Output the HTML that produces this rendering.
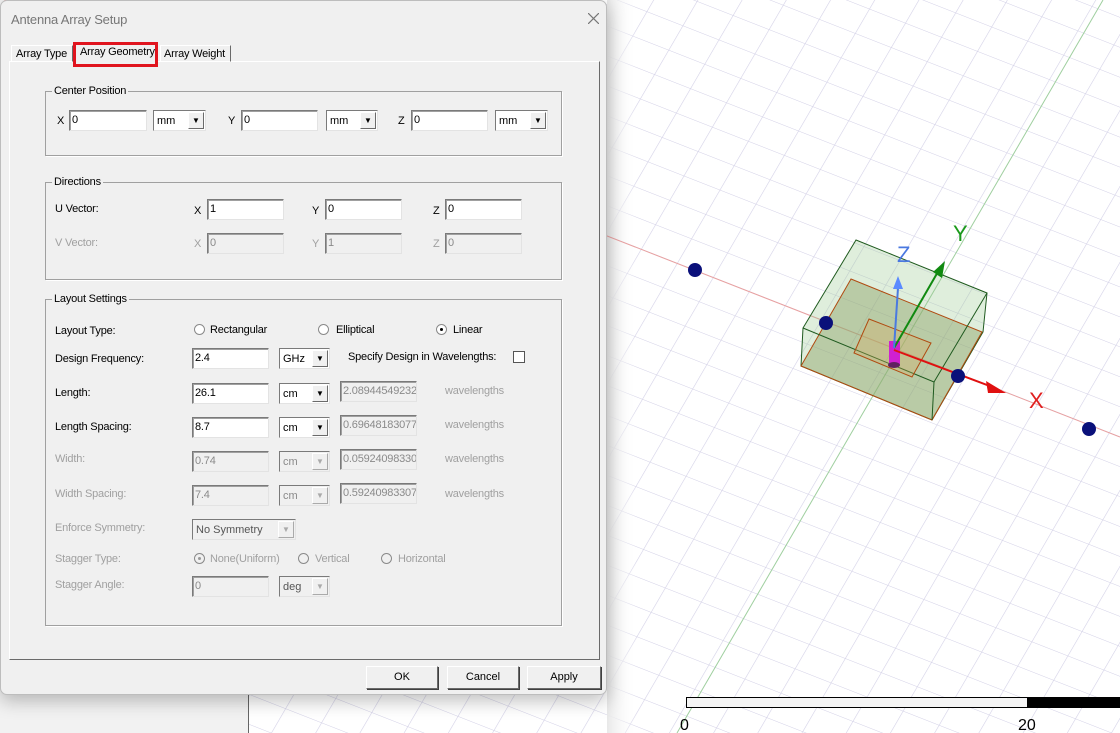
<!DOCTYPE html>
<html><head><meta charset="utf-8"><style>
*{box-sizing:border-box;margin:0;padding:0}
body{width:1120px;height:733px;overflow:hidden;position:relative;background:#fff;font-family:"Liberation Sans",sans-serif;font-size:11px;color:#000}
.a{position:absolute}
.dlg{position:absolute;left:0;top:0;width:607px;height:695px;background:#f0f0f0;border:1px solid #bdbdbd;border-radius:7px;box-shadow:0 6px 18px rgba(0,0,0,.25)}
.t{position:absolute;white-space:nowrap;line-height:13px;letter-spacing:-0.2px}
.g{color:#a0a0a0}
.in{position:absolute;height:21px;background:#fff;border:1px solid;border-color:#7a7a7a #e3e3e3 #e3e3e3 #7a7a7a;box-shadow:inset 1px 1px 0 #a0a0a0;padding:3px 0 0 2px;font-size:11px;white-space:nowrap;overflow:hidden;letter-spacing:-0.2px}
.in.d{background:#f0f0f0;color:#8a8a8a}
.sel{position:absolute;height:21px;background:#fff;border:1px solid;border-color:#7a7a7a #e3e3e3 #e3e3e3 #7a7a7a;padding:4px 0 0 3px;font-size:11px}
.sel.d{background:#f0f0f0;color:#8a8a8a}
.sel b{position:absolute;right:1px;top:1px;width:16px;height:17px;background:#f0f0f0;border:1px solid;border-color:#fff #6a6a6a #6a6a6a #fff;font-size:8px;text-align:center;line-height:15px;font-weight:normal;color:#000}
.sel.d b{color:#aaa;border-color:#fff #aaa #aaa #fff}
.grp{position:absolute;border:1px solid #a0a0a0;box-shadow:1px 1px 0 #fff}
.grp span{position:absolute;top:-8px;left:6px;background:#f0f0f0;padding:0 2px;line-height:14px;letter-spacing:-0.2px}
.rad{position:absolute;width:11px;height:11px;border-radius:50%;background:#fff;border:1px solid #8a8a8a}
.rad.on::after{content:"";position:absolute;left:3px;top:3px;width:3px;height:3px;border-radius:50%;background:#000}
.rad.d{background:#f0f0f0}
.rad.d.on::after{background:#999}
.btn{position:absolute;height:23px;background:#f0f0f0;border:1px solid;border-color:#fff #6a6a6a #6a6a6a #fff;box-shadow:1px 1px 0 #404040;text-align:center;line-height:20px}
</style></head><body>
<svg class="a" style="left:0;top:0" width="1120" height="733">
<defs><pattern id="gp" patternUnits="userSpaceOnUse" width="36" height="30" patternTransform="matrix(1 0.392 0.473 -0.813 893 348)">
<path d="M0 0H36M0 0V30" stroke="#d2d0e6" stroke-width="1.1" fill="none"/></pattern>
<linearGradient id="sh" x1="0" x2="1"><stop offset="0" stop-color="#e8e8e8"/><stop offset="1" stop-color="#fff" stop-opacity="0"/></linearGradient></defs>
<rect x="248" y="0" width="872" height="733" fill="url(#gp)"/>
<rect x="0" y="0" width="248" height="733" fill="#f2f2f2"/>
<line x1="248.5" y1="0" x2="248.5" y2="733" stroke="#666"/>
<rect x="607" y="0" width="30" height="733" fill="url(#sh)"/>
<line x1="0" y1="-2" x2="1120" y2="437" stroke="#e8a0a0" stroke-width="1"/>
<line x1="1103" y1="0" x2="677" y2="733" stroke="#9fcf9f" stroke-width="1"/>
<polygon points="856,240 987,293 983,332 932,420 801,366 803,328" fill="rgba(150,200,140,0.3)" stroke="#1f5a1f" stroke-width="1"/>
<polygon points="851,279 982,332 932,420 801,366" fill="rgba(140,160,100,0.45)" stroke="#b04a10" stroke-width="1"/>
<polyline points="803,328 934,382 987,293" fill="none" stroke="#1f5a1f"/>
<line x1="934" y1="382" x2="932" y2="420" stroke="#1f5a1f"/>
<polygon points="869,319 931,343 912,377 854,353" fill="rgba(220,170,90,0.3)" stroke="#b04a10"/>
<rect x="889" y="341" width="11" height="24" fill="#d020d0"/>
<ellipse cx="894" cy="365" rx="6" ry="3" fill="#602060"/>
<line x1="894" y1="350" x2="995" y2="388" stroke="#e01010" stroke-width="2"/>
<polygon points="986,381 1006,393 988,393" fill="#e01010"/>
<line x1="894" y1="348" x2="939" y2="270" stroke="#108a10" stroke-width="2"/>
<polygon points="933,272 945,261 942,278" fill="#108a10"/>
<line x1="894" y1="348" x2="898" y2="288" stroke="#4a7ae0" stroke-width="2"/>
<polygon points="893,289 898,276 903,289" fill="#5a8aff"/>
<text x="897" y="262" font-size="22" fill="#4a78e0" font-family="Liberation Sans">Z</text>
<text x="953" y="241" font-size="22" fill="#1a9a1a" font-family="Liberation Sans">Y</text>
<text x="1029" y="408" font-size="22" fill="#e02020" font-family="Liberation Sans">X</text>
<circle cx="695" cy="270" r="7" fill="#0a107a"/>
<circle cx="826" cy="323" r="7" fill="#0a107a"/>
<circle cx="958" cy="376" r="7" fill="#0a107a"/>
<circle cx="1089" cy="429" r="7" fill="#0a107a"/>
<rect x="686.5" y="697.5" width="341" height="10" fill="#f4f4f4" stroke="#000"/>
<rect x="1027" y="697" width="93" height="11" fill="#000"/>
<text x="680" y="730" font-size="16" font-family="Liberation Sans">0</text>
<text x="1018" y="730" font-size="16" font-family="Liberation Sans">20</text>
</svg>

<div class="dlg">
<div class="t" style="left:10px;top:12px;font-size:13px;color:#777">Antenna Array Setup</div>
<svg class="a" style="left:587px;top:12px" width="11" height="11"><path d="M0 0L11 11M11 0L0 11" stroke="#777" stroke-width="1.2"/></svg>
<div class="a" style="left:8px;top:60px;width:591px;height:599px;border:1px solid;border-color:#fff #6a6a6a #6a6a6a #fff"></div>
<div class="a" style="left:10px;top:44px;width:62px;height:17px;border:1px solid;border-color:#fff #6a6a6a transparent #fff"></div>
<div class="t" style="left:15px;top:47px">Array Type</div>
<div class="a" style="left:159px;top:44px;width:71px;height:17px;border:1px solid;border-color:#fff #6a6a6a transparent #fff"></div>
<div class="t" style="left:163px;top:47px">Array Weight</div>
<div class="a" style="left:72px;top:41px;width:85px;height:25px;background:#f0f0f0;border:3px solid #e0141e"></div>
<div class="t" style="left:79px;top:45px">Array Geometry</div>

<div class="grp" style="left:44px;top:90px;width:517px;height:65px"><span>Center Position</span></div>
<div class="t" style="left:56px;top:114px">X</div>
<div class="in" style="left:68px;top:109px;width:78px">0</div>
<div class="sel" style="left:152px;top:109px;width:53px">mm<b>▼</b></div>
<div class="t" style="left:227px;top:114px">Y</div>
<div class="in" style="left:240px;top:109px;width:77px">0</div>
<div class="sel" style="left:325px;top:109px;width:52px">mm<b>▼</b></div>
<div class="t" style="left:397px;top:114px">Z</div>
<div class="in" style="left:410px;top:109px;width:77px">0</div>
<div class="sel" style="left:494px;top:109px;width:53px">mm<b>▼</b></div>

<div class="grp" style="left:44px;top:181px;width:517px;height:98px"><span>Directions</span></div>
<div class="t" style="left:54px;top:202px">U Vector:</div>
<div class="t" style="left:193px;top:204px">X</div>
<div class="in" style="left:206px;top:198px;width:77px">1</div>
<div class="t" style="left:311px;top:204px">Y</div>
<div class="in" style="left:324px;top:198px;width:77px">0</div>
<div class="t" style="left:432px;top:204px">Z</div>
<div class="in" style="left:444px;top:198px;width:77px">0</div>
<div class="t g" style="left:54px;top:236px">V Vector:</div>
<div class="t g" style="left:193px;top:237px">X</div>
<div class="in d" style="left:206px;top:232px;width:77px">0</div>
<div class="t g" style="left:311px;top:237px">Y</div>
<div class="in d" style="left:324px;top:232px;width:77px">1</div>
<div class="t g" style="left:432px;top:237px">Z</div>
<div class="in d" style="left:444px;top:232px;width:77px">0</div>

<div class="grp" style="left:44px;top:298px;width:517px;height:327px"><span>Layout Settings</span></div>
<div class="t" style="left:54px;top:324px">Layout Type:</div>
<div class="rad" style="left:193px;top:323px"></div><div class="t" style="left:209px;top:323px">Rectangular</div>
<div class="rad" style="left:317px;top:323px"></div><div class="t" style="left:335px;top:323px">Elliptical</div>
<div class="rad on" style="left:435px;top:323px"></div><div class="t" style="left:452px;top:323px">Linear</div>

<div class="t" style="left:54px;top:352px">Design Frequency:</div>
<div class="in" style="left:191px;top:347px;width:77px">2.4</div>
<div class="sel" style="left:278px;top:347px;width:51px">GHz<b>▼</b></div>
<div class="t" style="left:347px;top:350px">Specify Design in Wavelengths:</div>
<div class="a" style="left:512px;top:350px;width:12px;height:12px;background:#fff;border:1px solid #555"></div>

<div class="t" style="left:54px;top:386px">Length:</div>
<div class="in" style="left:191px;top:382px;width:77px">26.1</div>
<div class="sel" style="left:278px;top:382px;width:51px">cm<b>▼</b></div>
<div class="in d" style="left:339px;top:380px;width:77px">2.08944549232</div>
<div class="t g" style="left:444px;top:384px">wavelengths</div>

<div class="t" style="left:54px;top:420px">Length Spacing:</div>
<div class="in" style="left:191px;top:416px;width:77px">8.7</div>
<div class="sel" style="left:278px;top:416px;width:51px">cm<b>▼</b></div>
<div class="in d" style="left:339px;top:414px;width:77px">0.69648183077</div>
<div class="t g" style="left:444px;top:418px">wavelengths</div>

<div class="t g" style="left:54px;top:452px">Width:</div>
<div class="in d" style="left:191px;top:450px;width:77px">0.74</div>
<div class="sel d" style="left:278px;top:450px;width:51px">cm<b>▼</b></div>
<div class="in d" style="left:339px;top:448px;width:77px">0.05924098330</div>
<div class="t g" style="left:444px;top:452px">wavelengths</div>

<div class="t g" style="left:54px;top:487px">Width Spacing:</div>
<div class="in d" style="left:191px;top:484px;width:77px">7.4</div>
<div class="sel d" style="left:278px;top:484px;width:51px">cm<b>▼</b></div>
<div class="in d" style="left:339px;top:482px;width:77px">0.59240983307</div>
<div class="t g" style="left:444px;top:487px">wavelengths</div>

<div class="t g" style="left:54px;top:521px">Enforce Symmetry:</div>
<div class="sel d" style="left:191px;top:518px;width:104px;color:#555">No Symmetry<b>▼</b></div>

<div class="t g" style="left:54px;top:552px">Stagger Type:</div>
<div class="rad d on" style="left:193px;top:552px"></div><div class="t g" style="left:209px;top:552px">None(Uniform)</div>
<div class="rad d" style="left:297px;top:552px"></div><div class="t g" style="left:314px;top:552px">Vertical</div>
<div class="rad d" style="left:380px;top:552px"></div><div class="t g" style="left:397px;top:552px">Horizontal</div>

<div class="t g" style="left:54px;top:578px">Stagger Angle:</div>
<div class="in d" style="left:191px;top:575px;width:77px">0</div>
<div class="sel d" style="left:278px;top:575px;width:51px;color:#555">deg<b>▼</b></div>

<div class="btn" style="left:365px;top:665px;width:72px">OK</div>
<div class="btn" style="left:446px;top:665px;width:72px">Cancel</div>
<div class="btn" style="left:526px;top:665px;width:74px">Apply</div>
</div>
</body></html>
